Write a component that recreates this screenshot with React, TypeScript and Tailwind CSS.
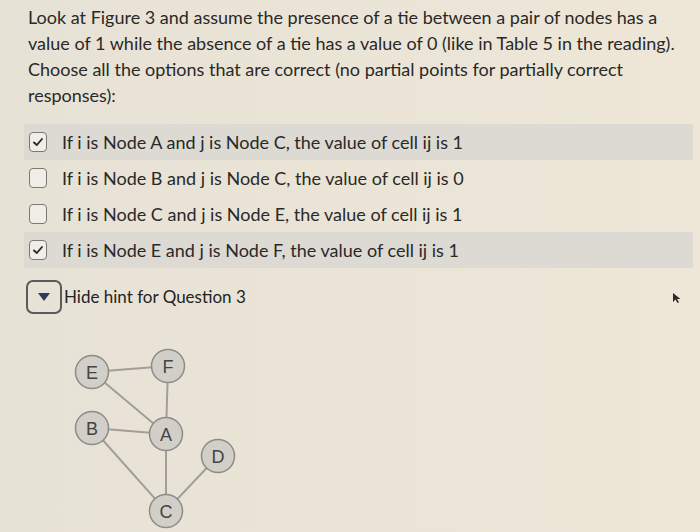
const options = [
  { label: "If i is Node A and j is Node C, the value of cell ij is 1", checked: true },
  { label: "If i is Node B and j is Node C, the value of cell ij is 0", checked: false },
  { label: "If i is Node C and j is Node E, the value of cell ij is 1", checked: false },
  { label: "If i is Node E and j is Node F, the value of cell ij is 1", checked: true },
];

const nodes: Record<string, [number, number]> = {
  E: [52, 42],
  F: [128, 36],
  B: [52, 98],
  A: [126, 104],
  D: [178, 126],
  C: [126, 181],
};

const edges = [
  ["E", "F"],
  ["E", "A"],
  ["F", "A"],
  ["B", "A"],
  ["B", "C"],
  ["A", "C"],
  ["D", "C"],
];

function Checkbox({ checked }: { checked: boolean }) {
  return (
    <div className="flex h-[20px] w-[18px] items-center justify-center rounded-[4px] border-[1.5px] border-[#7a7873] bg-[#f1eee8]">
      {checked && (
        <svg width="12" height="12" viewBox="0 0 12 12">
          <path d="M2 6.5 L4.8 9 L10 3" fill="none" stroke="#2a2a2a" strokeWidth="1.9" strokeLinecap="round" strokeLinejoin="round" />
        </svg>
      )}
    </div>
  );
}

function Graph() {
  return (
    <svg width="220" height="200" viewBox="0 0 220 200" className="ml-[40px] block">
      {edges.map(([a, b]) => (
        <line
          key={a + b}
          x1={nodes[a][0]}
          y1={nodes[a][1]}
          x2={nodes[b][0]}
          y2={nodes[b][1]}
          stroke="#a19f98"
          strokeWidth="2"
        />
      ))}
      {Object.entries(nodes).map(([name, [x, y]]) => (
        <g key={name}>
          <circle cx={x} cy={y} r="16.5" fill="#d2cfc8" stroke="#8e8c87" strokeWidth="1.5" />
          <text
            x={x}
            y={y + 6.5}
            textAnchor="middle"
            fontSize="18"
            fill="#45443f"
            fontFamily="'Liberation Sans', Arial, sans-serif"
          >
            {name}
          </text>
        </g>
      ))}
    </svg>
  );
}

export default function App() {
  return (
    <div className="relative h-[532px] w-[700px] overflow-hidden bg-gradient-to-r from-[#e7e2d6] to-[#eee7d8] font-['Lato','Open_Sans',sans-serif] text-[#2a2927]">
      <p className="whitespace-nowrap px-[28px] pt-[4px] text-[18px] leading-[26px]">
        Look at Figure 3 and assume the presence of a tie between a pair of nodes has a
        <br />
        value of 1 while the absence of a tie has a value of 0 (like in Table 5 in the reading).
        <br />
        Choose all the options that are correct (no partial points for partially correct
        <br />
        responses):
      </p>

      <div className="ml-[24px] mr-[7px] mt-[16px] flex flex-col">
        {options.map((o) => (
          <div
            key={o.label}
            className={`flex h-9 items-center gap-[15px] pl-[5px] text-[18px] ${o.checked ? "bg-[#dcdad3]" : ""}`}
          >
            <Checkbox checked={o.checked} />
            <span>{o.label}</span>
          </div>
        ))}
      </div>

      <div className="ml-[26px] mt-[12px] flex items-center gap-[2px]">
        <div className="flex h-[34px] w-[36px] items-center justify-center rounded-[7px] border-2 border-[#5a5a5c]">
          <svg width="14" height="10" viewBox="0 0 14 10">
            <path d="M1 1 L13 1 L7 9 Z" fill="#2f3a5c" />
          </svg>
        </div>
        <span className="text-[17px] text-[#232323]">Hide hint for Question 3</span>
      </div>

      <div className="mt-[16px]">
        <Graph />
      </div>

      <svg width="10" height="12" viewBox="0 0 10 12" className="absolute left-[672px] top-[292px]">
        <path d="M1 1 L1 10 L3.5 7.5 L5.5 11 L7 10.3 L5 7 L8.5 7 Z" fill="#2b2b2b" />
      </svg>
    </div>
  );
}
